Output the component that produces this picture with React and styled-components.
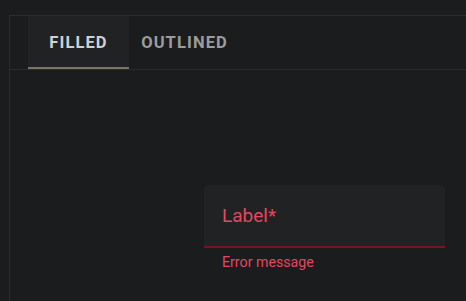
import React, { useState } from "react";
import styled, { createGlobalStyle } from "styled-components";

const Global = createGlobalStyle`
  html, body {
    margin: 0;
    padding: 0;
    background: #1b1c1e;
    font-family: Roboto, "Liberation Sans", sans-serif;
  }
`;

const tabs = ["Filled", "Outlined"];

export default function App() {
  const [active, setActive] = useState(0);
  return (
    <>
      <Global />
      <Page>
        <Panel>
          <TabBar>
            {tabs.map((t, i) => (
              <Tab key={t} active={i === active} onClick={() => setActive(i)}>
                {t}
              </Tab>
            ))}
          </TabBar>
          <Content>
            <FieldWrap>
              <Field>
                <Label>Label*</Label>
              </Field>
              <Helper>Error message</Helper>
            </FieldWrap>
          </Content>
        </Panel>
      </Page>
    </>
  );
}

const Page = styled.div`
  width: 466px;
  height: 301px;
  overflow: hidden;
  padding: 15px 0 0 9px;
  box-sizing: border-box;
`;

const Panel = styled.div`
  width: 520px;
  height: 300px;
  border-left: 1px solid #2b2c2e;
  border-top: 1px solid #2b2c2e;
`;

const TabBar = styled.div`
  display: flex;
  padding-left: 18px;
  height: 53px;
  border-bottom: 1px solid #2b2c2e;
`;

const Tab = styled.div`
  width: ${({ active }) => (active ? "101px" : "111px")};
  display: flex;
  align-items: center;
  justify-content: center;
  box-sizing: border-box;
  padding-top: 2px;
  font-size: 16.5px;
  font-weight: 700;
  letter-spacing: 1.1px;
  text-transform: uppercase;
  color: ${({ active }) => (active ? "#d0d0d0" : "#9c9c9c")};
  background: ${({ active }) => (active ? "#212224" : "transparent")};
  border-bottom: 2px solid ${({ active }) => (active ? "#7d7466" : "transparent")};
  cursor: pointer;
`;

const Content = styled.div`
  padding: 115px 0 0 194px;
`;

const FieldWrap = styled.div`
  width: 241px;
`;

const Field = styled.div`
  height: 61px;
  background: #212224;
  border-radius: 5px 5px 0 0;
  border-bottom: 2px solid #7a1226;
  display: flex;
  align-items: center;
  padding-left: 18px;
`;

const Label = styled.span`
  font-size: 19px;
  color: #e4475f;
`;

const Helper = styled.div`
  padding: 6px 0 0 18px;
  font-size: 14.2px;
  color: #e4475f;
`;
